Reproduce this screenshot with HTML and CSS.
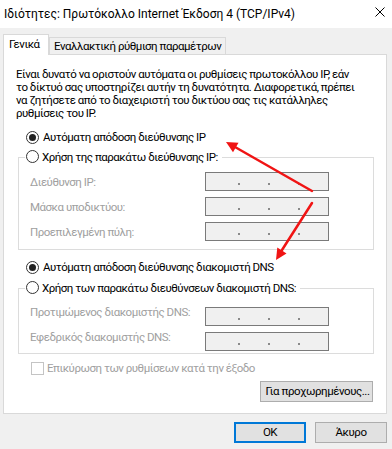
FILE: index.html
```html
<!DOCTYPE html>
<html lang="el">
<head>
    <meta charset="UTF-8">
    <title>Ιδιότητες: Πρωτόκολλο Internet Έκδοση 4 (TCP/IPv4)</title>
    <link rel="stylesheet" href="styles.css">
</head>
<body>
    <div class="dialog">
        <div class="titlebar">
            <span class="title">Ιδιότητες: Πρωτόκολλο Internet Έκδοση 4 (TCP/IPv4)</span>
            <svg class="close" width="10" height="10" viewBox="0 0 10 10">
                <path d="M0.5 0.5 L9.5 9.5 M9.5 0.5 L0.5 9.5" stroke="#000" stroke-width="1" fill="none"/>
            </svg>
        </div>
        <div class="content">
            <div class="tabs">
                <div class="tab active">Γενικά</div>
                <div class="tab">Εναλλακτική ρύθμιση παραμέτρων</div>
            </div>
            <div class="panel">
                <p class="intro">
                    Είναι δυνατό να οριστούν αυτόματα οι ρυθμίσεις πρωτοκόλλου IP, εάν<br>
                    το δίκτυό σας υποστηρίζει αυτήν τη δυνατότητα. Διαφορετικά, πρέπει<br>
                    να ζητήσετε από το διαχειριστή του δικτύου σας τις κατάλληλες<br>
                    ρυθμίσεις του IP.
                </p>
                <div class="radio-row first">
                    <span class="radio checked"></span>Αυτόματη απόδοση διεύθυνσης IP
                </div>
                <fieldset class="group ip-group">
                    <legend><span class="radio"></span>Χρήση της παρακάτω διεύθυνσης IP:</legend>
                    <div class="field">
                        <span class="label">Διεύθυνση IP:</span>
                        <div class="ipbox"><span class="dot"></span><span class="dot"></span><span class="dot"></span></div>
                    </div>
                    <div class="field">
                        <span class="label">Μάσκα υποδικτύου:</span>
                        <div class="ipbox"><span class="dot"></span><span class="dot"></span><span class="dot"></span></div>
                    </div>
                    <div class="field">
                        <span class="label">Προεπιλεγμένη πύλη:</span>
                        <div class="ipbox"><span class="dot"></span><span class="dot"></span><span class="dot"></span></div>
                    </div>
                </fieldset>
                <div class="radio-row second">
                    <span class="radio checked"></span>Αυτόματη απόδοση διεύθυνσης διακομιστή DNS
                </div>
                <fieldset class="group dns-group">
                    <legend><span class="radio"></span>Χρήση των παρακάτω διευθύνσεων διακομιστή DNS:</legend>
                    <div class="field">
                        <span class="label">Προτιμώμενος διακομιστής DNS:</span>
                        <div class="ipbox"><span class="dot"></span><span class="dot"></span><span class="dot"></span></div>
                    </div>
                    <div class="field">
                        <span class="label">Εφεδρικός διακομιστής DNS:</span>
                        <div class="ipbox"><span class="dot"></span><span class="dot"></span><span class="dot"></span></div>
                    </div>
                </fieldset>
                <div class="check-row">
                    <span class="checkbox"></span>Επικύρωση των ρυθμίσεων κατά την έξοδο
                </div>
                <div class="adv-row">
                    <button class="btn adv">Για προχωρημένους...</button>
                </div>
            </div>
            <div class="actions">
                <button class="btn ok">OK</button>
                <button class="btn">Άκυρο</button>
            </div>
        </div>
        <!-- red annotation arrows drawn over the dialog -->
        <svg class="arrows" width="392" height="449" viewBox="0 0 392 449">
            <g stroke="#f01414" stroke-width="2.5" stroke-linecap="round" fill="none">
                <line x1="312" y1="191" x2="235" y2="147"/>
                <line x1="312" y1="203" x2="282" y2="250"/>
            </g>
            <g fill="#f01414">
                <polygon points="226,142 238.5,142.8 233,152.2"/>
                <polygon points="276,260 286.5,253.6 277.3,247.6"/>
            </g>
        </svg>
    </div>
</body>
</html>
```

FILE: styles.css
```css
* {
    box-sizing: border-box;
}
body {
    margin: 0;
    font-family: Roboto, 'Noto Sans', sans-serif;
    font-size: 12px;
    color: #000;
    background: #f0f0f0;
}
.dialog {
    position: relative;
    width: 392px;
    height: 449px;
    overflow: hidden;
    background: #f0f0f0;
    white-space: nowrap;
}
.titlebar {
    height: 28px;
    background: #fff;
    display: flex;
    align-items: center;
    justify-content: space-between;
    padding: 0 7px 0 4px;
}
.title {
    font-size: 12px;
    line-height: 16px;
}
.close {
    display: block;
    margin-top: -4px;
}
.content {
    padding: 6px 5px 0 3px;
    font-size: 11.5px;
    letter-spacing: -0.48px;
}
.tabs {
    display: flex;
    align-items: flex-end;
    height: 20px;
}
.tab {
    height: 17px;
    line-height: 17px;
    padding: 0 4px;
    border: 1px solid #d9d9d9;
    border-bottom: none;
    background: #f0f0f0;
}
.tab.active {
    position: relative;
    z-index: 1;
    height: 21px;
    width: 46px;
    margin-bottom: -1px;
    line-height: 18px;
    padding: 0 0 0 5px;
    background: #fff;
}
.panel {
    height: 360px;
    background: #fff;
    border: 1px solid #d9d9d9;
    padding: 13px 0 0 12px;
}
.intro {
    margin: 0 0 10px 0;
    line-height: 13px;
}
.radio-row, .check-row {
    display: flex;
    align-items: center;
    height: 14px;
    line-height: 14px;
}
.radio {
    display: inline-block;
    position: relative;
    width: 13px;
    height: 13px;
    border: 1px solid #333;
    border-radius: 50%;
    margin: 0 4px 0 10px;
    flex: none;
    vertical-align: -2px;
}
.radio.checked::after {
    content: '';
    position: absolute;
    left: 2px;
    top: 2px;
    width: 7px;
    height: 7px;
    border-radius: 50%;
    background: #222;
}
.group {
    border: 1px solid #dcdcdc;
    margin: 6px 12px 0 2px;
    padding: 8px 0 8px 11px;
    min-width: 0;
}
.group legend {
    padding: 0 4px 0 0;
    margin-left: -5px;
    line-height: 14px;
    height: 14px;
}
.group legend .radio {
    margin: 0 3px 0 1px;
}
.dns-group {
    margin-top: 7px;
    padding-top: 12px;
    padding-bottom: 2px;
}
.second {
    margin-top: 10px;
}
.field {
    display: flex;
    align-items: center;
    height: 19px;
    color: #a0a0a0;
}
.field + .field {
    margin-top: 6px;
}
.dns-group .field {
    align-items: flex-start;
}
.dns-group .field .label {
    margin-top: -2px;
}
.label {
    width: 175px;
    flex: none;
}
.ipbox {
    width: 124px;
    height: 19px;
    border: 1px solid #7a7a7a;
    background: #f0f0f0;
    display: flex;
    align-items: center;
    gap: 28px;
    padding: 4px 0 0 32px;
}
.dot {
    width: 2px;
    height: 2px;
    background: #8a8a8a;
}
.check-row {
    margin-top: 7px;
    color: #a0a0a0;
}
.checkbox {
    width: 13px;
    height: 13px;
    border: 1px solid #c4c4c4;
    margin: 0 3px 0 15px;
    flex: none;
}
.adv-row {
    display: flex;
    justify-content: flex-end;
    margin: 6px 13px 0 0;
}
.btn {
    font-family: inherit;
    font-size: 11.5px;
    letter-spacing: -0.45px;
    color: #000;
    background: #e1e1e1;
    border: 1px solid #adadad;
    height: 21px;
    padding: 0 6px;
    line-height: 17px;
    margin: 0;
}
.btn.adv {
    width: 113px;
    padding: 0 0 0 2px;
}
.actions {
    display: flex;
    justify-content: flex-end;
    gap: 9px;
    margin-top: 8px;
}
.actions .btn {
    width: 72px;
}
.btn.ok {
    border: 2px solid #0078d7;
}
.arrows {
    position: absolute;
    left: 0;
    top: 0;
    pointer-events: none;
}
```
